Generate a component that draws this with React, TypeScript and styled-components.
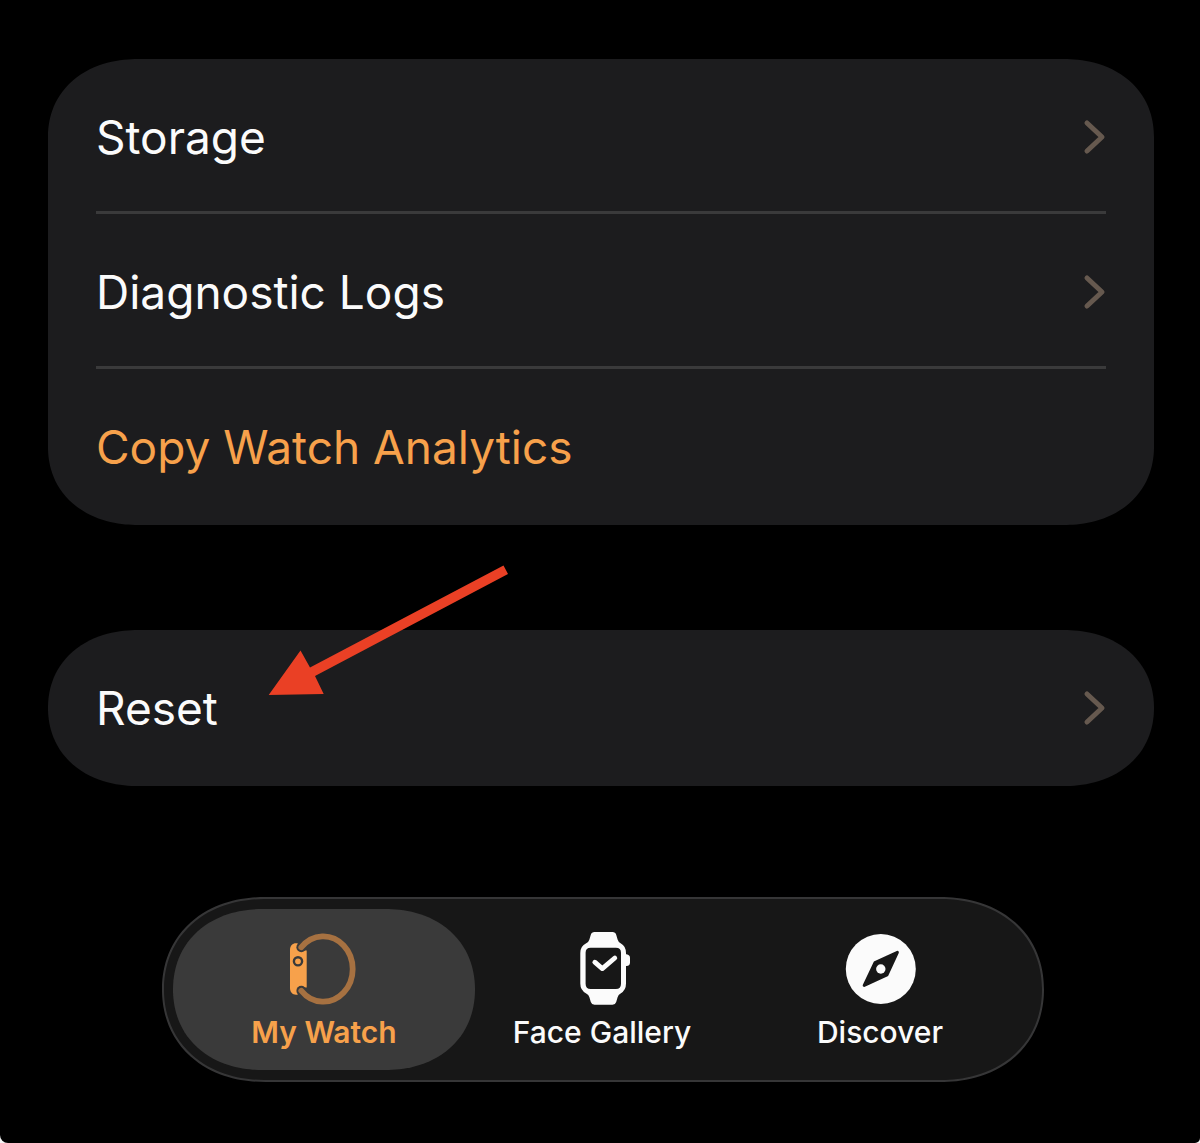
import React from "react";
import styled, { createGlobalStyle } from "styled-components";

const GlobalStyle = createGlobalStyle`
  *, *::before, *::after { box-sizing: border-box; }
  body {
    margin: 0;
    background: #f4f4f4;
    font-family: Inter, "Liberation Sans", sans-serif;
  }
`;

const Page = styled.main`
  min-height: 100vh;
  padding: 59px 46px 60px 48px;
  background: #000;
  border-radius: 0 0 5px 8px;
`;

const Card = styled.ul`
  position: relative;
  list-style: none;
  margin: 0 0 105px;
  padding: 0 0 1px;
  background: #1c1c1e;
  border-radius: 90px / 78px;
  corner-shape: superellipse(1.1);
`;

const Row = styled.li`
  margin: 0 48px;

  & + & {
    box-shadow: 0 -3px 0 #3a3a3b;
  }
`;

const RowButton = styled.button<{ $accent?: boolean }>`
  display: flex;
  align-items: center;
  justify-content: space-between;
  width: 100%;
  height: 155px;
  padding: 0;
  border: 0;
  background: none;
  color: ${(p) => (p.$accent ? "#f7a14b" : "#fbfbfb")};
  font: inherit;
  font-size: 46px;
  line-height: 56px;
  text-align: left;
  cursor: pointer;
`;

const Chevron = styled.svg`
  flex: none;
  width: 24px;
  height: 36px;
  fill: none;
  stroke: #66594f;
  stroke-width: 5;
  stroke-linecap: round;
  stroke-linejoin: round;
`;

const Arrow = styled.svg`
  position: absolute;
  left: 220px;
  top: -65px;
  width: 240px;
  height: 132px;
  fill: #ea4025;
  pointer-events: none;
`;

const TabBar = styled.nav`
  display: flex;
  margin: 111px 110px 0 114px;
  padding: 10px 23px 10px 21px;
  border: 2px solid #363637;
  border-radius: 104px / 93px;
  corner-shape: superellipse(1.1);
  background: #171717;
`;

const Tab = styled.button<{ $active?: boolean }>`
  display: flex;
  flex: 1 1 0;
  flex-direction: column;
  align-items: center;
  gap: 8px;
  height: 161px;
  margin: 0 -12px;
  padding: 23px 0 0;
  border: 0;
  border-radius: 90px / 81px;
  corner-shape: superellipse(1.1);
  background: ${(p) => (p.$active ? "#3a3a3a" : "transparent")};
  color: ${(p) => (p.$active ? "#f7a14b" : "#fbfbfb")};
  font: inherit;
  font-size: 30px;
  font-weight: ${(p) => (p.$active ? 600 : 500)};
  line-height: 36px;
  white-space: nowrap;
  cursor: pointer;
`;

const TabIcon = styled.svg`
  flex: none;
  width: 72px;
  height: 74px;
`;

function ChevronIcon() {
  return (
    <Chevron viewBox="0 0 24 36" aria-hidden="true">
      <path d="M5 4 L20 18 L5 32" />
    </Chevron>
  );
}

function MyWatchIcon() {
  return (
    <TabIcon viewBox="0 -1 72 74" aria-hidden="true">
      <mask id="body-cut" maskUnits="userSpaceOnUse" x="0" y="0" width="72" height="72">
        <rect width="72" height="72" fill="#fff" />
        <circle cx="13.3" cy="14.3" r="4.9" />
        <circle cx="13.3" cy="57.7" r="4.9" />
        <circle cx="10" cy="28.3" r="4.1" fill="none" stroke="#000" strokeWidth="2.4" />
      </mask>
      <path
        d="M2 17 C2 13 4.5 10.3 8 10.3 H9.6 L12 17.6 H18.7 V54.6 H12 L9.6 61.7 H8 C4.5 61.7 2 59 2 55 Z"
        fill="#f7a14b"
        mask="url(#body-cut)"
      />
      <path
        d="M13.3 14.3 A29.4 32.7 0 1 1 13.3 57.7"
        fill="none"
        stroke="#a67141"
        strokeWidth="5.8"
        strokeLinecap="round"
      />
    </TabIcon>
  );
}

function FaceGalleryIcon() {
  return (
    <TabIcon viewBox="0 -1 72 74" aria-hidden="true">
      <path
        fill="#fbfbfb"
        fillRule="evenodd"
        d="M28.5 -1 H46.5 Q49.4 -1 50.2 1.8 L51.6 6.5 Q52.3 9 54.6 10.2 Q60 13 60 20 V50.6 Q60 57.6 54.6 60.4 Q52.3 61.6 51.6 64.2 L50.2 69 Q49.4 71.7 46.5 71.7 H28.5 Q25.6 71.7 24.8 69 L23.4 64.2 Q22.7 61.6 20.2 60.4 Q14.3 57.6 14.3 50.6 V20 Q14.3 13 20.2 10.2 Q22.7 9 23.4 6.5 L24.8 1.8 Q25.6 -1 28.5 -1 Z M24.7 14.7 Q19.6 14.7 19.6 19.8 V50.8 Q19.6 56 24.7 56 H49.9 Q55 56 55 50.8 V19.8 Q55 14.7 49.9 14.7 Z"
      />
      <path fill="#fbfbfb" d="M59 21.3 H60.5 Q64 21.8 64 25 V29.4 Q64 32.6 60.5 33 H59 Z" />
      <path
        d="M28.8 29.2 L36.3 35.6 L48.8 25"
        fill="none"
        stroke="#fbfbfb"
        strokeWidth="4.8"
        strokeLinecap="round"
        strokeLinejoin="round"
      />
    </TabIcon>
  );
}

function DiscoverIcon() {
  return (
    <TabIcon viewBox="0 -1 72 74" aria-hidden="true">
      <circle cx="36.8" cy="36" r="35" fill="#fbfbfb" />
      <path
        d="M53.4 19.3 L31 29.6 L20.2 52.4 L43 41.8 Z"
        fill="#171717"
        stroke="#171717"
        strokeWidth="3"
        strokeLinejoin="round"
      />
      <circle cx="36.8" cy="36" r="4.7" fill="#fbfbfb" />
    </TabIcon>
  );
}

export default function App() {
  return (
    <>
      <GlobalStyle />
      <Page>
        <Card>
          <Row>
            <RowButton type="button">
              Storage
              <ChevronIcon />
            </RowButton>
          </Row>
          <Row>
            <RowButton type="button">
              Diagnostic Logs
              <ChevronIcon />
            </RowButton>
          </Row>
          <Row>
            <RowButton type="button" $accent>
              Copy Watch Analytics
            </RowButton>
          </Row>
        </Card>
        <Card>
          <Row>
            <RowButton type="button">
              Reset
              <ChevronIcon />
            </RowButton>
          </Row>
          <Arrow viewBox="268 565 240 132" aria-hidden="true">
            <path d="M503.5 565.5 L508 574 L315 676 L323.7 694 L268.7 695 L300.5 650.5 L310 667.5 Z" />
          </Arrow>
        </Card>
        <TabBar aria-label="Sections">
          <Tab type="button" $active aria-current="page">
            <MyWatchIcon />
            My Watch
          </Tab>
          <Tab type="button">
            <FaceGalleryIcon />
            Face Gallery
          </Tab>
          <Tab type="button">
            <DiscoverIcon />
            Discover
          </Tab>
        </TabBar>
      </Page>
    </>
  );
}
